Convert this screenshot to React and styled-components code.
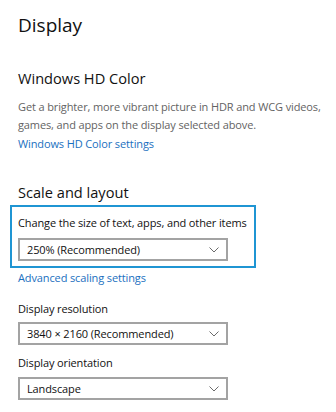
import React from 'react';
import styled, { createGlobalStyle } from 'styled-components';

const GlobalStyle = createGlobalStyle`
  html, body {
    margin: 0;
    padding: 0;
    background: #ffffff;
  }
  body {
    font-family: "Open Sans", "Noto Sans", "Liberation Sans", sans-serif;
    color: #111111;
  }
`;

const Page = styled.div`
  width: 336px;
  height: 412px;
  box-sizing: border-box;
  padding: 11px 0 0 18px;
  overflow: hidden;
`;

const Title = styled.h1`
  margin: 0;
  font-size: 19px;
  font-weight: 400;
  line-height: 28px;
  color: #111111;
`;

const SectionTitle = styled.h2`
  margin: ${(p) => p.top}px 0 0;
  font-size: 14.6px;
  font-weight: 400;
  line-height: 22px;
  color: #111111;
`;

const Description = styled.p`
  margin: 9px 0 0;
  width: 312px;
  font-size: 11px;
  letter-spacing: -0.12px;
  line-height: 18px;
  color: #636363;
`;

const Link = styled.a`
  display: block;
  margin-top: ${(p) => p.top}px;
  font-size: 11px;
  letter-spacing: -0.12px;
  line-height: 18px;
  color: #1a6fc0;
  text-decoration: none;
`;

const FocusBox = styled.div`
  margin: 2px 0 0 -8px;
  width: 246px;
  box-sizing: border-box;
  border: 2px solid #1f95d3;
  padding: 7px 0 5px 6px;
`;

const Label = styled.div`
  margin-top: ${(p) => p.top || 0}px;
  font-size: 11px;
  letter-spacing: -0.12px;
  line-height: 18px;
  white-space: nowrap;
  color: #111111;
`;

const Select = styled.div`
  margin-top: ${(p) => p.top}px;
  width: 210px;
  height: 23px;
  box-sizing: border-box;
  border: 2px solid #a3a3a3;
  display: flex;
  align-items: center;
  justify-content: space-between;
  padding: 0 7px 0 7px;
  font-size: 11px;
  letter-spacing: -0.12px;
  white-space: nowrap;
  color: #111111;
`;

const Chevron = () => (
  <svg width="10" height="6" viewBox="0 0 10 6">
    <polyline points="0.5,0.5 5,5 9.5,0.5" fill="none" stroke="#6b6b6b" strokeWidth="1" />
  </svg>
);

const Dropdown = ({ top, value }) => (
  <Select top={top}>
    <span>{value}</span>
    <Chevron />
  </Select>
);

export default function App() {
  return (
    <>
      <GlobalStyle />
      <Page>
        <Title>Display</Title>
        <SectionTitle top={28}>Windows HD Color</SectionTitle>
        <Description>
          Get a brighter, more vibrant picture in HDR and WCG videos, games, and apps on the display selected above.
        </Description>
        <Link top={1}>Windows HD Color settings</Link>
        <SectionTitle top={28}>Scale and layout</SectionTitle>
        <FocusBox>
          <Label>Change the size of text, apps, and other items</Label>
          <Dropdown top={6} value="250% (Recommended)" />
        </FocusBox>
        <Link top={1}>Advanced scaling settings</Link>
        <Label top={13}>Display resolution</Label>
        <Dropdown top={4} value="3840 × 2160 (Recommended)" />
        <Label top={9}>Display orientation</Label>
        <Dropdown top={5} value="Landscape" />
      </Page>
    </>
  );
}
